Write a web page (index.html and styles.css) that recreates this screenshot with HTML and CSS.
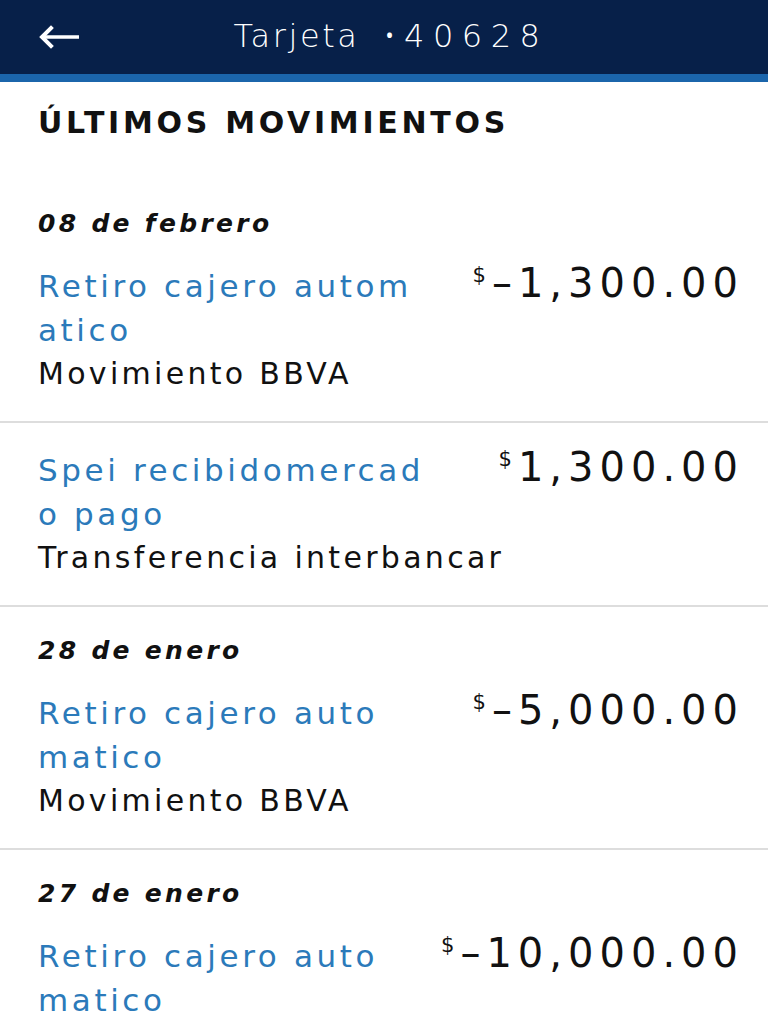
FILE: index.html
```html
<!DOCTYPE html>
<html lang="es">
<head>
  <meta charset="UTF-8">
  <meta name="viewport" content="width=device-width, initial-scale=1.0">
  <title>Tarjeta •40628</title>
  <link rel="stylesheet" href="styles.css">
</head>
<body>
  <header class="topbar">
    <button class="back" aria-label="Volver">
      <svg width="42" height="24" viewBox="0 0 42 24">
        <path d="M41 12H6" fill="none" stroke="#fff" stroke-width="3.5"/>
        <path d="M13 3L4 12l9 9" fill="none" stroke="#fff" stroke-width="4" stroke-linecap="square"/>
      </svg>
    </button>
    <h1 class="title"><span class="card-label">Tarjeta</span><span class="card-number">•40628</span></h1>
  </header>

  <main class="movements">
    <h2 class="section-title">ÚLTIMOS MOVIMIENTOS</h2>

    <ul class="list">
      <li class="movement">
        <p class="date">08 de febrero</p>
        <div class="row">
          <div class="info">
            <p class="concept">Retiro cajero autom<br>atico</p>
            <p class="kind">Movimiento BBVA</p>
          </div>
          <p class="amount"><sup>$</sup>–1,300.00</p>
        </div>
      </li>
      <li class="movement">
        <div class="row">
          <div class="info">
            <p class="concept">Spei recibidomercad<br>o pago</p>
            <p class="kind">Transferencia interbancar</p>
          </div>
          <p class="amount"><sup>$</sup>1,300.00</p>
        </div>
      </li>
      <li class="movement">
        <p class="date">28 de enero</p>
        <div class="row">
          <div class="info">
            <p class="concept">Retiro cajero auto<br>matico</p>
            <p class="kind">Movimiento BBVA</p>
          </div>
          <p class="amount"><sup>$</sup>–5,000.00</p>
        </div>
      </li>
      <li class="movement">
        <p class="date">27 de enero</p>
        <div class="row">
          <div class="info">
            <p class="concept">Retiro cajero auto<br>matico</p>
            <p class="kind">Movimiento BBVA</p>
          </div>
          <p class="amount"><sup>$</sup>–10,000.00</p>
        </div>
      </li>
    </ul>
  </main>
</body>
</html>
```

FILE: styles.css
```css
body {
  margin: 0;
  font-family: "DejaVu Sans", "Open Sans", Arial, sans-serif;
  background-color: #fff;
  color: #111;
}

p {
  margin: 0;
}

/* barra superior */
.topbar {
  display: flex;
  align-items: center;
  height: 74px;
  padding: 0 38px;
  background-color: #072049;
  border-bottom: 8px solid #1b65ab;
}

.back {
  display: flex;
  padding: 0;
  margin: 0;
  border: none;
  background: none;
  cursor: pointer;
}

.title {
  flex: 1;
  display: flex;
  justify-content: center;
  margin: 0 28px 0 0;
  padding-bottom: 2px;
  font-size: 32px;
  line-height: 36px;
  font-weight: 200;
  color: #fff;
}

.card-label {
  letter-spacing: 2.6px;
  margin-right: 24px;
}

.card-number {
  letter-spacing: 8.5px;
}

/* lista de movimientos */
.section-title {
  margin: 23px 38px 39px;
  font-size: 30px;
  line-height: 36px;
  font-weight: 700;
  letter-spacing: 3.7px;
}

.list {
  list-style: none;
  margin: 0;
  padding: 0;
}

.movement {
  padding: 25px 24px 25px 38px;
  border-bottom: 2px solid #dddddd;
}

.date {
  margin: 4px 0 25px;
  font-size: 25px;
  line-height: 30px;
  font-weight: 700;
  font-style: italic;
  letter-spacing: 3.3px;
}

.row {
  display: flex;
  align-items: baseline;
  justify-content: space-between;
}

.info {
  flex: 1;
  min-width: 0;
}

.concept {
  font-size: 31px;
  line-height: 44px;
  letter-spacing: 3.6px;
  color: #2b7aba;
}

.kind {
  font-size: 30px;
  line-height: 44px;
  letter-spacing: 3.3px;
  white-space: nowrap;
}

.amount {
  font-size: 40px;
  line-height: 36px;
  letter-spacing: 6px;
  white-space: nowrap;
}

.amount sup {
  font-size: 21px;
  line-height: 0;
  letter-spacing: 0;
  vertical-align: 15px;
  margin-right: 6px;
}
```
